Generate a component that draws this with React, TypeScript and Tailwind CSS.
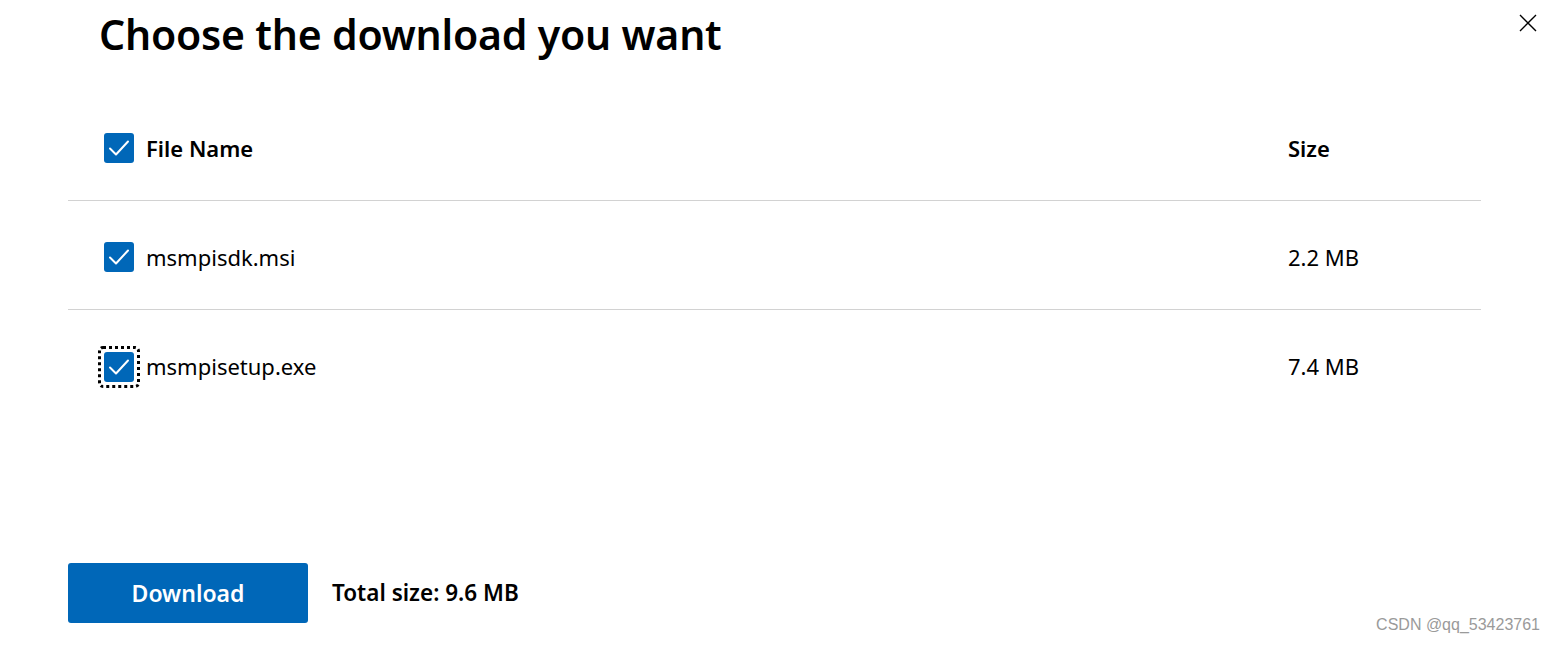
import React from "react";

const font = { fontFamily: '"Noto Sans", "Open Sans", Arial, sans-serif' };

function CheckBox({ focused = false }: { focused?: boolean }) {
  const box = (
    <div className="flex h-[30px] w-[30px] items-center justify-center rounded-[3px] bg-[#0067b8]">
      <svg width="22" height="18" viewBox="0 0 22 18" fill="none">
        <path d="M2 9.5 L8 15.5 L20 2.5" stroke="white" strokeWidth="2" strokeLinecap="round" strokeLinejoin="round" />
      </svg>
    </div>
  );
  if (!focused) return <div className="ml-9 mr-3">{box}</div>;
  return (
    <div className="ml-[30px] mr-[6px] rounded-[5px] border-[3px] border-dotted border-black p-[3px]">{box}</div>
  );
}

const rows = [
  { name: "msmpisdk.msi", size: "2.2 MB" },
  { name: "msmpisetup.exe", size: "7.4 MB", focused: true },
];

export default function App() {
  return (
    <div className="relative h-[645px] w-[1555px] overflow-hidden bg-white text-black" style={font}>
      <button className="absolute right-[18px] top-[14px] text-black">
        <svg width="18" height="18" viewBox="0 0 18 18">
          <path d="M1 1 L17 17 M17 1 L1 17" stroke="black" strokeWidth="1.4" />
        </svg>
      </button>

      <div className="pl-[68px] pr-[74px]">
        <h1 className="pl-[31px] pt-[6px] text-[41px] font-semibold leading-[56px] tracking-[-0.2px]">
          Choose the download you want
        </h1>

        <div className="mt-[48px]">
          <div className="flex h-[91px] items-center border-b border-[#d2d2d2] pb-[14px]">
            <CheckBox />
            <span className="flex-1 text-[22px] font-semibold">File Name</span>
            <span className="w-[193px] text-[22px] font-semibold">Size</span>
          </div>
          {rows.map((r, i) => (
            <div
              key={r.name}
              className={`flex h-[109px] items-center pt-[4px] ${i < rows.length - 1 ? "border-b border-[#d2d2d2]" : ""}`}
            >
              <CheckBox focused={r.focused} />
              <span className="flex-1 text-[22px]">{r.name}</span>
              <span className="w-[193px] text-[22px]">{r.size}</span>
            </div>
          ))}
        </div>

        <div className="mt-[144px] flex items-center">
          <button className="h-[60px] w-[240px] rounded-[3px] bg-[#0067b8] text-[23px] font-semibold text-white">
            Download
          </button>
          <span className="ml-[24px] text-[22.5px] font-semibold">Total size: 9.6 MB</span>
        </div>
      </div>

      <div
        className="absolute bottom-[8px] right-[15px] text-[16px] text-[#9a9a9a]"
        style={{ fontFamily: '"Liberation Sans", Arial, sans-serif' }}
      >
        CSDN @qq_53423761
      </div>
    </div>
  );
}
